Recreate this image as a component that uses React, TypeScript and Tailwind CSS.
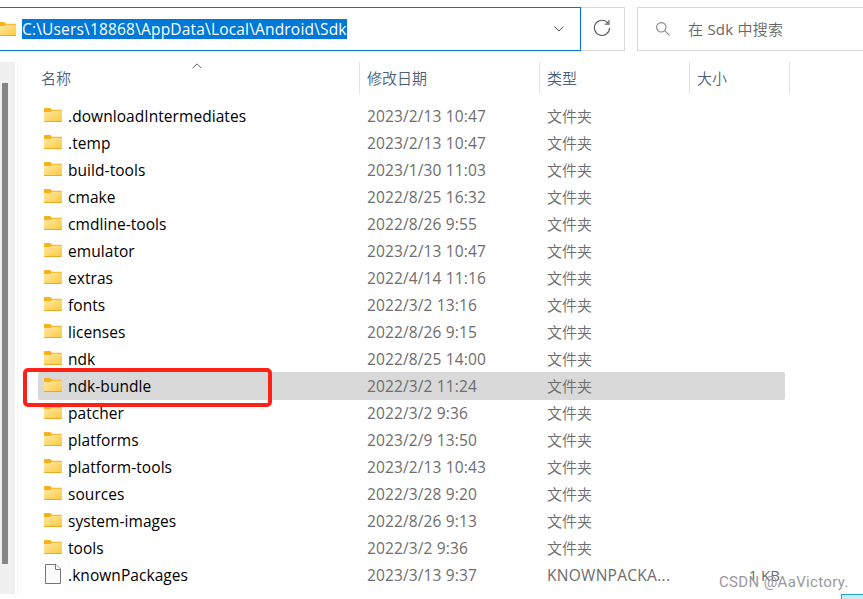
import React from 'react';
import clsx from 'clsx';

interface Entry {
  name: string;
  modified: string;
  type: string;
  size?: string;
  selected?: boolean;
}

const FOLDER = '文件夹';

const entries: Entry[] = [
  { name: '.downloadIntermediates', modified: '2023/2/13 10:47', type: FOLDER },
  { name: '.temp', modified: '2023/2/13 10:47', type: FOLDER },
  { name: 'build-tools', modified: '2023/1/30 11:03', type: FOLDER },
  { name: 'cmake', modified: '2022/8/25 16:32', type: FOLDER },
  { name: 'cmdline-tools', modified: '2022/8/26 9:55', type: FOLDER },
  { name: 'emulator', modified: '2023/2/13 10:47', type: FOLDER },
  { name: 'extras', modified: '2022/4/14 11:16', type: FOLDER },
  { name: 'fonts', modified: '2022/3/2 13:16', type: FOLDER },
  { name: 'licenses', modified: '2022/8/26 9:15', type: FOLDER },
  { name: 'ndk', modified: '2022/8/25 14:00', type: FOLDER },
  { name: 'ndk-bundle', modified: '2022/3/2 11:24', type: FOLDER, selected: true },
  { name: 'patcher', modified: '2022/3/2 9:36', type: FOLDER },
  { name: 'platforms', modified: '2023/2/9 13:50', type: FOLDER },
  { name: 'platform-tools', modified: '2023/2/13 10:43', type: FOLDER },
  { name: 'sources', modified: '2022/3/28 9:20', type: FOLDER },
  { name: 'system-images', modified: '2022/8/26 9:13', type: FOLDER },
  { name: 'tools', modified: '2022/3/2 9:36', type: FOLDER },
  { name: '.knownPackages', modified: '2023/3/13 9:37', type: 'KNOWNPACKA...', size: '1 KB' },
];

function FolderIcon() {
  return (
    <svg width="18" height="14" viewBox="0 0 18 14" className="block shrink-0">
      <defs>
        <linearGradient id="folder" x1="0" y1="0" x2="1" y2="1">
          <stop offset="0" stopColor="#ffe9a6" />
          <stop offset="1" stopColor="#fdc93c" />
        </linearGradient>
      </defs>
      <path d="M0 .8Q0 0 .8 0H6.2L8 1.8H17.2Q18 1.8 18 2.6V6H0Z" fill="#f5b21b" />
      <path d="M0 4H6.4L8 2.8H18V13.2Q18 14 17.2 14H.8Q0 14 0 13.2Z" fill="url(#folder)" />
      <path d="M.3 13.5H17.7" stroke="#e9ab24" />
    </svg>
  );
}

function FileIcon() {
  return (
    <svg width="17" height="20" viewBox="0 0 17 20" className="ml-px block shrink-0">
      <path d="M.5.5H11L15.5 5V19.5H.5Z" fill="#fafafa" stroke="#757575" />
      <path d="M10.5.5V5.5H15.5" fill="#fff" stroke="#757575" />
    </svg>
  );
}

function AddressBar() {
  return (
    <div className="flex h-11 items-stretch">
      <div className="flex w-[581px] items-center border border-l-0 border-[#0078d4]">
        <div className="-ml-[2px] mb-px">
          <FolderIcon />
        </div>
        <div className="ml-[6px] h-5 w-[325px] whitespace-nowrap bg-[#0078d7] text-[15.5px] leading-5 tracking-[0.18px] text-white">
          C:\Users\18868\AppData\Local\Android\Sdk
        </div>
        <svg width="10" height="6" viewBox="0 0 10 6" className="ml-auto mr-4 block">
          <path d="M.5.5L5 5L9.5.5" fill="none" stroke="#555" />
        </svg>
      </div>
      <div className="flex w-11 items-center justify-center border border-l-0 border-[#d9d9d9]">
        <svg width="18" height="18" viewBox="0 0 18 18" className="mb-[2px] mr-[2px] block" fill="none" stroke="#606060" strokeWidth="1.2">
          <path d="M15.3 4.6A7.6 7.6 0 1 0 16.6 9" />
          <path d="M15.9 1V5.1H11.8" />
        </svg>
      </div>
      <div className="ml-3 flex flex-1 items-center border border-r-0 border-[#d9d9d9] pl-[18px]">
        <svg width="14" height="14" viewBox="0 0 14 14" className="mb-px block" fill="none" stroke="#858585" strokeWidth="1.1">
          <circle cx="5.3" cy="5.3" r="4.7" />
          <path d="M8.7 8.7L13.4 13.4" />
        </svg>
        <span className="ml-[18px] tracking-[0.25px] text-[#666]">在 Sdk 中搜索</span>
      </div>
    </div>
  );
}

function ColumnHeader() {
  return (
    <div className="flex h-8 text-[#4c607a]">
      <div className="relative w-[342px] border-r border-[#e2e2e2] pl-[23px] leading-8">
        名称
        <svg width="10" height="6" viewBox="0 0 10 6" className="absolute left-[174px] top-px">
          <path d="M.5 5.3L5 .8L9.5 5.3" fill="none" stroke="#606060" />
        </svg>
      </div>
      <div className="w-[180px] border-r border-[#e2e2e2] pl-[7px] leading-8">修改日期</div>
      <div className="w-[150px] border-r border-[#e2e2e2] pl-[7px] leading-8">类型</div>
      <div className="w-[100px] border-r border-[#e2e2e2] pl-[7px] leading-8">大小</div>
    </div>
  );
}

function Row({ entry }: { entry: Entry }) {
  return (
    <div
      className={clsx(
        'ml-5 flex w-[747px] items-center text-[#6d6d6d]',
        entry.selected ? '-mt-px h-7 rounded-[2px] bg-[#d9d9d9]' : 'h-[27px]'
      )}
    >
      <div className="flex w-[329px] items-center pl-[6px] text-black">
        <div className="mb-[3px] w-6">{entry.type === FOLDER ? <FolderIcon /> : <FileIcon />}</div>
        <span className="mb-px text-[15.5px] tracking-[0.06px]">{entry.name}</span>
      </div>
      <div className="mb-px w-[180px] text-[15.5px] tracking-[0.13px]">{entry.modified}</div>
      <div className={clsx('mb-px w-[150px]', entry.type !== FOLDER && 'text-[15.5px] tracking-[0.28px]')}>
        {entry.type}
      </div>
      <div className="mb-px w-[83px] text-right">{entry.size}</div>
    </div>
  );
}

export default function App() {
  return (
    <div className="relative flex h-[599px] w-[863px] flex-col overflow-hidden bg-white pt-[7px] font-['Open_Sans','Noto_Sans_CJK_SC_DemiLight','Noto_Sans_CJK_SC',sans-serif] text-[15px] leading-5">
      <AddressBar />
      <div className="mt-[11px] flex flex-1">
        <div className="h-[532px] w-[15px] bg-[#f0f0f0] pl-[2px] pt-[21px]">
          <div className="h-[481px] w-[6px] bg-[#858585]" />
        </div>
        <div className="ml-[2px] h-[532px] w-px bg-[#f5f5f5]" />
        <div className="flex-1">
          <ColumnHeader />
          <div className="mt-[9px]">
            {entries.map((entry) => (
              <Row key={entry.name} entry={entry} />
            ))}
          </div>
        </div>
      </div>

      {/* highlight around ndk-bundle */}
      <div className="absolute left-[22.5px] top-[367.5px] h-[39px] w-[249px] rounded-[5px] border-4 border-[#ff2116]" />

      {/* corner of the view switch button */}
      <div className="absolute left-[841px] top-[594px] h-[10px] w-[30px] border border-[#26a0da] bg-[#cce8f6]" />

      <div className="absolute left-[719px] top-[572px] whitespace-nowrap font-['Roboto',sans-serif] text-[15px] leading-5 tracking-[0.35px] text-[#999]">
        CSDN @AaVictory.
      </div>
    </div>
  );
}
